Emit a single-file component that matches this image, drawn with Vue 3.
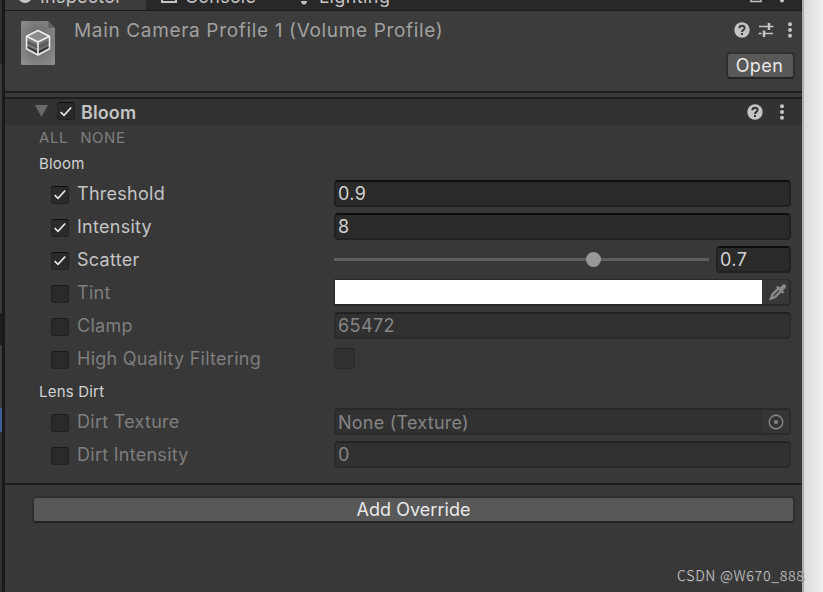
<template>
    <div class="screen">
        <div class="neighbour">
            <i class="n1"></i><i class="n2"></i><i class="n3"></i><i class="n4"></i><i class="n5"></i><i class="n6"></i><i class="n7"></i>
        </div>
        <div class="panel">
            <div class="tabs">
                <div class="tab active">
                    <svg class="tab-info" width="14" height="14" viewBox="0 0 14 14">
                        <circle cx="7" cy="7" r="7" fill="#c4c4c4" />
                        <path d="M7 4v5" stroke="#3c3c3c" stroke-width="2" />
                    </svg>
                    <span>Inspector</span>
                </div>
                <div class="tab console">
                    <svg width="16" height="14" viewBox="0 0 16 14">
                        <rect x="1" y="1" width="14" height="12" fill="none" stroke="#c4c4c4" stroke-width="2" />
                        <path d="M3 10.500h10" stroke="#999" stroke-width="1" />
                    </svg>
                    <span>Console</span>
                </div>
                <div class="tab lighting">
                    <svg width="8" height="16" viewBox="0 0 8 16">
                        <path d="M1 8h6v2H1zM1 12h6q-.5 3.500-3 3.500T1 12" fill="#c4c4c4" />
                    </svg>
                    <span>Lighting</span>
                </div>
                <svg class="tab-tools" width="40" height="10" viewBox="0 0 40 10">
                    <path d="M1 0v1.500h10V0" fill="none" stroke="#c4c4c4" stroke-width="1.400" />
                    <circle cx="32" cy=".5" r="2" fill="#c4c4c4" />
                </svg>
            </div>

            <div class="header">
                <svg class="asset" width="34" height="44" viewBox="0 0 34 44">
                    <defs>
                        <radialGradient id="paper" cx=".5" cy=".45" r=".75">
                            <stop offset="0" stop-color="#5e5e5e" />
                            <stop offset=".5" stop-color="#7a7a7a" />
                            <stop offset="1" stop-color="#929292" />
                        </radialGradient>
                    </defs>
                    <path d="M1.500 0H27l7 7v35.500q0 1.500-1.500 1.500h-31Q0 44 0 42.500v-41Q0 0 1.500 0z" fill="url(#paper)" />
                    <path d="M27 0l7 7h-5.500Q27 7 27 5.500z" fill="#636363" />
                    <path d="M17 9.500l11.500 5.700L17 21 5.500 15.200z" fill="#8c8c8c" />
                    <path d="M5.500 15L17 21v13L5.500 28z" fill="#808080" />
                    <path d="M28.500 15L17 21v13l11.500-6z" fill="#747474" />
                    <path d="M5.500 19L17 24.500 28.500 19v3.500L17 28 5.500 22.500z" fill="#5c5c5c" />
                    <path d="M5.500 24.500L17 30l11.500-5.500V28L17 34 5.500 28z" fill="#3a3a3a" />
                    <path d="M17 9.500l11.500 5.700v12.600L17 34 5.500 27.800V15.200zM5.500 15.200L17 21l11.500-5.800M17 21v13" fill="none"
                        stroke="#ededed" stroke-width="1.600" stroke-linejoin="round" />
                </svg>
                <div class="title">Main Camera Profile 1 (Volume Profile)</div>
                <div class="header-side">
                    <div class="icons">
                        <svg width="16" height="16" viewBox="0 0 16 16">
                            <circle cx="8" cy="8" r="7.700" fill="#c4c4c4" />
                            <path d="M5.400 6.200Q5.500 3.700 8 3.700t2.600 2.300Q10.600 7.200 9.300 8 8 8.700 8 10" fill="none" stroke="#3c3c3c" stroke-width="2" />
                            <path d="M7 11h2v2H7z" fill="#3c3c3c" />
                        </svg>
                        <svg width="16" height="16" viewBox="0 0 16 16">
                            <path d="M1 4.500h9.500M12 4.500h3.500M.5 11.500h3M6.500 11.500h8.500" stroke="#c4c4c4" stroke-width="1.300" />
                            <path d="M11 1v7M6 8.500V15" stroke="#c4c4c4" stroke-width="2.600" />
                        </svg>
                        <svg width="4" height="16" viewBox="0 0 4 16">
                            <circle cx="2" cy="2.200" r="2" fill="#c4c4c4" />
                            <circle cx="2" cy="8" r="2" fill="#c4c4c4" />
                            <circle cx="2" cy="13.800" r="2" fill="#c4c4c4" />
                        </svg>
                    </div>
                    <button class="btn open">Open</button>
                </div>
            </div>

            <div class="component-bar">
                <svg class="fold" width="13" height="12" viewBox="0 0 13 12">
                    <path d="M0 0h13L6.500 12z" fill="#6a6a6a" />
                </svg>
                <span class="check">
                    <svg width="12" height="11" viewBox="0 0 12 11"><path d="M.7 6.200L4 9.300 11.200 1.500" /></svg>
                </span>
                <span class="component-name">Bloom</span>
                <svg class="help" width="16" height="16" viewBox="0 0 16 16">
                    <circle cx="8" cy="8" r="7.700" fill="#c4c4c4" />
                    <path d="M5.400 6.200Q5.500 3.700 8 3.700t2.600 2.300Q10.600 7.200 9.300 8 8 8.700 8 10" fill="none" stroke="#323232" stroke-width="2" />
                    <path d="M7 11h2v2H7z" fill="#323232" />
                </svg>
                <svg width="4" height="16" viewBox="0 0 4 16">
                    <circle cx="2" cy="2.200" r="2" fill="#c4c4c4" />
                    <circle cx="2" cy="8" r="2" fill="#c4c4c4" />
                    <circle cx="2" cy="13.800" r="2" fill="#c4c4c4" />
                </svg>
            </div>

            <div class="toggles"><span class="all">ALL</span><span class="none">NONE</span></div>

            <section v-for="group in groups" :key="group.name">
                <div class="group-name">{{ group.name }}</div>
                <div v-for="row in group.rows" :key="row.label" class="row" :class="{ off: !row.on }">
                    <span class="check">
                        <svg v-if="row.on" width="12" height="11" viewBox="0 0 12 11"><path d="M.7 6.200L4 9.300 11.200 1.500" /></svg>
                    </span>
                    <span class="label">{{ row.label }}</span>
                    <div v-if="row.type === 'number'" class="field">{{ row.value }}</div>
                    <template v-else-if="row.type === 'slider'">
                        <div class="slider">
                            <div class="knob" :style="{ left: row.value * 100 + '%' }"></div>
                        </div>
                        <div class="field short">{{ row.value }}</div>
                    </template>
                    <div v-else-if="row.type === 'color'" class="color">
                        <div class="swatch"></div>
                        <svg width="18" height="18" viewBox="0 0 18 18">
                            <path d="M9.300 5.700L3.500 11.500l-1.500 4 4-1.500 5.800-5.800" fill="none" stroke="#8a8a8a" stroke-width="2.400" />
                            <path d="M1 17l1.500-4.500 3 3z" fill="#8a8a8a" />
                            <path d="M8 3.500l6.500 6.500" stroke="#8a8a8a" stroke-width="2.400" />
                            <path d="M10 5.500L13.500 2q1.700-1.600 3 0t0 3L12.500 8.500z" fill="#8a8a8a" />
                        </svg>
                    </div>
                    <div v-else-if="row.type === 'toggle'" class="box"></div>
                    <div v-else class="field object">
                        <span>{{ row.value }}</span>
                        <div class="picker">
                            <svg width="16" height="16" viewBox="0 0 16 16">
                                <circle cx="8" cy="8" r="6.800" fill="none" stroke="#858585" stroke-width="1.400" />
                                <circle cx="8" cy="8" r="2.100" fill="#858585" />
                            </svg>
                        </div>
                    </div>
                </div>
            </section>

            <div class="footer">
                <button class="btn add">Add Override</button>
            </div>
        </div>
        <div class="outside"></div>
        <div class="watermark">CSDN @W670_888</div>
    </div>
</template>

<script setup>
const groups = [
    {
        name: 'Bloom',
        rows: [
            { label: 'Threshold', on: true, type: 'number', value: 0.9 },
            { label: 'Intensity', on: true, type: 'number', value: 8 },
            { label: 'Scatter', on: true, type: 'slider', value: 0.7 },
            { label: 'Tint', on: false, type: 'color' },
            { label: 'Clamp', on: false, type: 'number', value: 65472 },
            { label: 'High Quality Filtering', on: false, type: 'toggle' },
        ],
    },
    {
        name: 'Lens Dirt',
        rows: [
            { label: 'Dirt Texture', on: false, type: 'object', value: 'None (Texture)' },
            { label: 'Dirt Intensity', on: false, type: 'number', value: 0 },
        ],
    },
];
</script>

<style>
body {
    margin: 0;
    overflow: hidden;
}
</style>

<style scoped>
* {
    box-sizing: border-box;
}

svg {
    display: block;
    flex: none;
}

.screen {
    position: relative;
    display: flex;
    width: 823px;
    height: 592px;
    overflow: hidden;
    background: #383838;
    font-family: Inter, "Liberation Sans", sans-serif;
    font-size: 18px;
    letter-spacing: 0.4px;
    color: #c4c4c4;
}

/* Edge of the docked window on the left */
.neighbour {
    display: flex;
    flex-direction: column;
    width: 5px;
    border-right: 3px solid #191919;
}

.neighbour i {
    flex: none;
}

.n1 { height: 40px; background: #303030; }
.n2 { height: 24px; background: #282828; }
.n3 { height: 249px; background: #383838; }
.n4 { height: 32px; background: #1e1e1e; }
.n5 { height: 63px; background: #3c3c3c; }
.n6 { height: 24px; background: #3e5f96; }
.n7 { height: 160px; background: #303030; }

.panel {
    width: 797px;
    border-bottom: 1px solid #3c3034;
}

.tabs {
    display: flex;
    align-items: flex-end;
    height: 11px;
    overflow: hidden;
    background: #282828;
    border-bottom: 1px solid #1e1e1e;
}

.tab {
    display: flex;
    align-items: center;
    height: 24px;
    flex: none;
    line-height: 24px;
}

.tab span {
    position: relative;
    top: -1px;
}

.active {
    width: 141px;
    padding-left: 13px;
    gap: 8px;
    background: #3c3c3c;
    letter-spacing: 0.25px;
}

.tab-info {
    margin-bottom: 4px;
}

.console {
    width: 151px;
    padding-left: 15px;
    gap: 8px;
    letter-spacing: 0.2px;
}

.console svg {
    margin-bottom: 5px;
}

.lighting svg {
    margin-bottom: 3px;
}

.lighting {
    gap: 11px;
    padding-left: 3px;
}

.tab-tools {
    margin: 0 12px 0 auto;
}

.header {
    display: flex;
    height: 82px;
    padding: 10px 7px 0 16px;
    background: #3c3c3c;
    border-bottom: 2px solid #1b1b1b;
}

.title {
    flex: 1;
    margin-left: 19px;
    font-size: 19px;
    letter-spacing: 0.66px;
    line-height: 20px;
    color: #a0a0a0;
}

.header-side {
    display: flex;
    flex-direction: column;
    align-items: flex-end;
}

.icons {
    display: flex;
    gap: 8px;
    padding: 1px 3px 0 0;
}

.icons svg:last-child {
    margin-left: 6px;
}

.btn {
    display: block;
    height: 27px;
    padding: 0;
    background: #585858;
    border: 2px solid #303030;
    border-bottom-color: #242424;
    border-radius: 4px;
    font: inherit;
    letter-spacing: 0.45px;
    line-height: 23px;
    color: #e8e8e8;
}

.open {
    width: 69px;
    margin-top: 14px;
    padding-right: 2px;
}

.component-bar {
    display: flex;
    align-items: center;
    height: 28px;
    margin-top: 4px;
    padding: 0 18px 0 30px;
    background: #323232;
    border-top: 2px solid #1e1e1e;
}

.fold {
    margin-bottom: 2px;
}

.check {
    display: flex;
    align-items: center;
    justify-content: center;
    flex: none;
    width: 18px;
    height: 18px;
    background: #2a2a2a;
    border: 1px solid #212121;
    border-top-color: #0e0e0e;
    border-radius: 3px;
}

.check path {
    fill: none;
    stroke: #e8e8e8;
    stroke-width: 1.7;
}

.component-bar .check {
    margin: 0 6px 2px 9px;
}

.component-name {
    flex: 1;
    font-weight: 600;
    letter-spacing: 0.1px;
}

.help {
    margin-right: 17px;
}

.toggles {
    display: flex;
    height: 26px;
    padding-left: 34px;
    gap: 12px;
    font-size: 15px;
    letter-spacing: 0.6px;
    line-height: 26px;
    color: #7e7e7e;
}

.group-name {
    height: 26px;
    padding-left: 34px;
    font-size: 15px;
    letter-spacing: 0.2px;
    line-height: 26px;
    color: #d2d2d2;
}

section + section .group-name {
    height: 30px;
    line-height: 34px;
}

.row {
    display: flex;
    align-items: center;
    height: 33px;
    padding: 0 11px 0 46px;
}

.row .check {
    margin-top: 2px;
}

.label {
    width: 257px;
    margin-left: 8px;
    letter-spacing: 0.27px;
}

.off .label {
    color: #7e7e7e;
}

.off .check {
    border-top-color: #181818;
}

.field {
    flex: 1;
    height: 27px;
    padding-left: 2px;
    background: #2a2a2a;
    border: 2px solid #212121;
    border-top-color: #0d0d0d;
    border-radius: 4px;
    line-height: 23px;
    color: #d2d2d2;
}

.off .field {
    background: #313131;
    border-color: #2b2b2b;
    border-top-color: #222;
    color: #858585;
}

.short {
    flex: none;
    width: 75px;
}

.slider {
    position: relative;
    flex: 1;
    height: 3px;
    margin-right: 7px;
    background: #5e5e5e;
}

.knob {
    position: absolute;
    top: -6px;
    width: 15px;
    height: 15px;
    margin-left: -11px;
    border-radius: 50%;
    background: #999;
}

.color {
    display: flex;
    flex: 1;
    align-items: center;
    height: 27px;
    border: 1px solid #2a2a2a;
    border-bottom-width: 2px;
    border-right-width: 2px;
    border-radius: 0 4px 4px 0;
}

.swatch {
    width: 427px;
    height: 24px;
    margin-right: 7px;
    background: #fff;
}

.box {
    width: 21px;
    height: 21px;
    background: #313131;
    border: 1px solid #2b2b2b;
    border-top-color: #222;
    border-radius: 3px;
}

.off .object {
    display: flex;
    border-top-color: #292929;
}

.object span {
    flex: 1;
    padding-top: 1px;
    letter-spacing: 0.24px;
}

.picker {
    display: flex;
    align-items: center;
    justify-content: center;
    width: 27px;
    background: #353535;
}

.footer {
    margin-top: 12px;
    padding: 11px 7px 0 27px;
    border-top: 2px solid #1e1e1e;
}

.add {
    width: 763px;
    letter-spacing: 0.05px;
}

.outside {
    flex: 1;
    border-left: 2px solid #acacac;
    background: linear-gradient(to right, #dadada, #f0f0f0);
}

/* Laid over both the panel and the page beside it */
.watermark {
    position: absolute;
    left: 677px;
    top: 566px;
    font-family: "Noto Sans CJK SC", sans-serif;
    font-size: 14px;
    font-weight: 300;
    line-height: 18px;
    letter-spacing: 0.8px;
    color: #d0d0d0;
    text-shadow: 1px 1px 1px #555;
    white-space: nowrap;
}
</style>
